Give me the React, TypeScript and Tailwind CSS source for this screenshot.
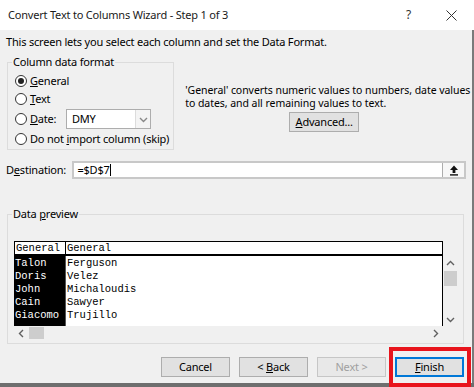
import React from 'react'

const rows = [
  ['Talon', 'Ferguson'],
  ['Doris', 'Velez'],
  ['John', 'Michaloudis'],
  ['Cain', 'Sawyer'],
  ['Giacomo', 'Trujillo'],
]

function Radio({ checked = false }: { checked?: boolean }) {
  return (
    <span className="w-[12px] h-[12px] rounded-full border border-[#333] bg-white flex items-center justify-center shrink-0">
      {checked && <span className="w-[6px] h-[6px] rounded-full bg-[#222]" />}
    </span>
  )
}

function Btn({ children, primary = false, disabled = false }: { children: React.ReactNode; primary?: boolean; disabled?: boolean }) {
  return (
    <div
      className={`w-[69px] h-[20px] flex items-center justify-center bg-[#e1e1e1] ${
        primary ? 'border-2 border-[#0078d7]' : 'border border-[#adadad]'
      } ${disabled ? 'text-[#a0a0a0] border-[#c6c6c6] bg-[#e8e8e8]' : 'text-black'}`}
    >
      {children}
    </div>
  )
}

function Chevron({ dir, color = '#606060' }: { dir: 'up' | 'down' | 'left' | 'right'; color?: string }) {
  const d = {
    up: 'M1 6 L4.5 2.5 L8 6',
    down: 'M1 3 L4.5 6.5 L8 3',
    left: 'M6 1 L2.5 4.5 L6 8',
    right: 'M3 1 L6.5 4.5 L3 8',
  }[dir]
  return (
    <svg width="9" height="9" viewBox="0 0 9 9">
      <path d={d} fill="none" stroke={color} strokeWidth="1.4" />
    </svg>
  )
}

export default function App() {
  return (
    <div className="relative w-[474px] h-[387px] overflow-hidden bg-[#f0f0f0] flex flex-col font-['Noto_Sans',sans-serif] text-[11px] tracking-[-0.2px] text-black leading-[16px]">
      {/* Title bar */}
      <div className="h-[30px] bg-white flex items-center shrink-0">
        <span className="pl-[8px] text-[#1a1a1a]">Convert Text to Columns Wizard - Step 1 of 3</span>
        <span className="ml-auto mr-[35px] text-[12px] text-[#333]">?</span>
        <svg width="11" height="11" viewBox="0 0 11 11" className="mr-[17px]">
          <path d="M0.5 0.5 L10.5 10.5 M10.5 0.5 L0.5 10.5" stroke="#333" strokeWidth="1" />
        </svg>
      </div>

      {/* Body */}
      <div className="flex flex-1 min-w-0">
        <div className="flex-1 min-w-0 flex flex-col px-[6px] pt-[4px]">
          <div>This screen lets you select each column and set the Data Format.</div>

          <div className="flex mt-[4px]">
            <fieldset className="ml-[1px] w-[167px] shrink-0 border border-[#dcdcdc] px-[4px] pb-[1px]">
              <legend className="px-[1px]">Column data format</legend>
              <div className="flex flex-col pl-[3px] pt-[2px] whitespace-nowrap">
                <div className="h-[18px] flex items-center gap-[3px]">
                  <Radio checked />
                  <span><span className="underline">G</span>eneral</span>
                </div>
                <div className="h-[18px] flex items-center gap-[3px]">
                  <Radio />
                  <span><span className="underline">T</span>ext</span>
                </div>
                <div className="h-[22px] flex items-center gap-[3px]">
                  <Radio />
                  <span className="w-[33px]"><span className="underline">D</span>ate:</span>
                  <div className="w-[85px] h-[20px] border border-[#adadad] bg-white flex items-center">
                    <span className="pl-[5px] flex-1">DMY</span>
                    <div className="w-[15px] h-full border-l border-[#dcdcdc] bg-[#f4f4f4] flex items-center justify-center">
                      <Chevron dir="down" color="#888" />
                    </div>
                  </div>
                </div>
                <div className="h-[18px] flex items-center gap-[3px]">
                  <Radio />
                  <span>Do not <span className="underline">i</span>mport column (skip)</span>
                </div>
              </div>
            </fieldset>

            <div className="ml-[11px] mt-[30px] min-w-0 flex flex-col text-[10.5px] leading-[13px] whitespace-nowrap tracking-[-0.05px]">
              <div>'General' converts numeric values to numbers, date values</div>
              <div>to dates, and all remaining values to text.</div>
              <div className="ml-[104px] mt-[2px] w-[70px] h-[20px] border border-[#adadad] bg-[#e1e1e1] flex items-center justify-center text-[11px] leading-[16px] tracking-[-0.2px]">
                <span><span className="underline">A</span>dvanced...</span>
              </div>
            </div>
          </div>

          {/* Destination */}
          <div className="flex items-center mt-[11px] h-[18px]">
            <span className="w-[67px]">D<span className="underline">e</span>stination:</span>
            <div className="w-[397px] h-[18px] border-2 border-[#c8c8c8] bg-white flex items-center">
              <span className="pl-[3px]">=$D$7</span>
              <span className="w-[1px] h-[12px] bg-black" />
              <div className="ml-auto w-[22px] h-full border-l border-[#adadad] bg-[#f7f7f7] flex items-center justify-center">
                <svg width="10" height="11" viewBox="0 0 10 11">
                  <path d="M5 0.5 L9 5 L6.4 5 L6.4 8 L3.6 8 L3.6 5 L1 5 Z" fill="#111" />
                  <rect x="1" y="9.2" width="8" height="1.4" fill="#111" />
                </svg>
              </div>
            </div>
          </div>

          {/* Data preview */}
          <fieldset className="mt-[27px] ml-[1px] w-[457px] border border-[#dcdcdc] px-[4px] pb-[3px]">
            <legend className="px-[1px]">Data <span className="underline">p</span>review</legend>
            <div className="pt-[19px] pl-[2px] flex flex-col">
              <div className="flex">
                <div className="w-[429px] flex flex-col font-['Liberation_Mono',monospace] text-[10.5px] tracking-normal leading-[13px]">
                  <div className="h-[15px] flex border border-black border-b-2 bg-white">
                    <div className="w-[51px] border-r border-black pl-[1px]">General</div>
                    <div className="pl-[1px]">General</div>
                  </div>
                  <div className="h-[70px] flex border-r border-black bg-white">
                    <div className="w-[52px] bg-black text-white pt-[1px] pl-[1px] border-r border-[#555]">
                      {rows.map(r => (
                        <div key={r[0]} className="h-[13px]">{r[0]}</div>
                      ))}
                    </div>
                    <div className="flex-1 pt-[1px] pl-[1px]">
                      {rows.map(r => (
                        <div key={r[1]} className="h-[13px]">{r[1]}</div>
                      ))}
                    </div>
                  </div>
                </div>
                <div className="w-[15px] flex flex-col">
                  <div className="h-[15px]" />
                  <div className="h-[15px] flex items-center justify-center">
                    <Chevron dir="up" />
                  </div>
                  <div className="h-[15px] mx-[1px] bg-[#cdcdcd]" />
                  <div className="flex-1" />
                  <div className="h-[14px] flex items-center justify-center">
                    <Chevron dir="down" />
                  </div>
                </div>
              </div>
              <div className="w-[429px] h-[14px] flex items-center">
                <div className="w-[15px] flex items-center justify-center">
                  <Chevron dir="left" />
                </div>
                <div className="w-[15px] h-[12px] bg-[#cdcdcd]" />
                <div className="flex-1" />
                <div className="w-[15px] flex items-center justify-center">
                  <Chevron dir="right" />
                </div>
              </div>
            </div>
          </fieldset>

          {/* Buttons */}
          <div className="flex justify-end gap-[9px] mt-[13px] pr-[2px]">
            <Btn>Cancel</Btn>
            <Btn>{'<\u00a0'}<span className="underline">B</span>ack</Btn>
            <Btn disabled>Next &gt;</Btn>
            <Btn primary><span className="underline">F</span>inish</Btn>
          </div>
        </div>
        <div className="w-[2px] shrink-0 bg-[#7a7a7a]" />
      </div>
      <div className="h-[4px] bg-[#6e6e6e] shrink-0" />

      {/* Annotation */}
      <div className="absolute left-[389px] top-[347px] w-[82px] h-[40px] border-[4px] border-[#e8141c]" />
    </div>
  )
}
